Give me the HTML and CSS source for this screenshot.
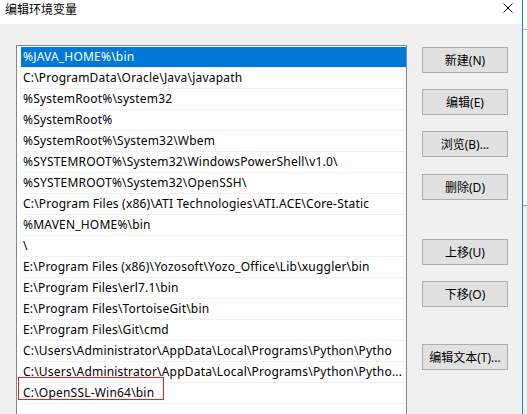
FILE: index.html
```html
<!DOCTYPE html>
<html lang="zh-CN">
<head>
<meta charset="utf-8">
<title>编辑环境变量</title>
<link rel="stylesheet" href="styles.css">
</head>
<body>
<div class="screen">
  <div class="window">
    <div class="titlebar">
      <span class="title">编辑环境变量</span>
      <svg class="close" width="10" height="10" viewBox="0 0 10 10"><path d="M0.5 0.5L9.5 9.5M9.5 0.5L0.5 9.5" stroke="#000" stroke-width="1" fill="none"/></svg>
    </div>
    <div class="content">
      <div class="list">
        <div class="row selected">%JAVA_HOME%\bin</div>
        <div class="row">C:\ProgramData\Oracle\Java\javapath</div>
        <div class="row">%SystemRoot%\system32</div>
        <div class="row">%SystemRoot%</div>
        <div class="row">%SystemRoot%\System32\Wbem</div>
        <div class="row">%SYSTEMROOT%\System32\WindowsPowerShell\v1.0\</div>
        <div class="row">%SYSTEMROOT%\System32\OpenSSH\</div>
        <div class="row">C:\Program Files (x86)\ATI Technologies\ATI.ACE\Core-Static</div>
        <div class="row">%MAVEN_HOME%\bin</div>
        <div class="row">\</div>
        <div class="row">E:\Program Files (x86)\Yozosoft\Yozo_Office\Lib\xuggler\bin</div>
        <div class="row">E:\Program Files\erl7.1\bin</div>
        <div class="row">E:\Program Files\TortoiseGit\bin</div>
        <div class="row">E:\Program Files\Git\cmd</div>
        <div class="row">C:\Users\Administrator\AppData\Local\Programs\Python\Pytho</div>
        <div class="row">C:\Users\Administrator\AppData\Local\Programs\Python\Pytho...</div>
        <div class="row">C:\OpenSSL-Win64\bin</div>
      </div>
      <div class="buttons">
        <div class="btn b-new">新建(N)</div>
        <div class="btn b-edit">编辑(E)</div>
        <div class="btn b-browse">浏览(B)...</div>
        <div class="btn b-del">删除(D)</div>
        <div class="btn b-up">上移(U)</div>
        <div class="btn b-down">下移(O)</div>
        <div class="btn b-text">编辑文本(T)...</div>
      </div>
    </div>
  </div>
  <div class="edge">
    <div class="edge-top"></div>
    <div class="edge-mid"></div>
    <div class="edge-bot"></div>
  </div>
  <div class="annot"></div>
</div>
</body>
</html>
```
FILE: styles.css
```css
html, body {
  margin: 0;
  padding: 0;
  background: #ffffff;
}
.screen {
  position: relative;
  width: 527px;
  height: 414px;
  overflow: hidden;
  display: flex;
  font-family: "Noto Sans", "Noto Sans CJK SC", sans-serif;
  font-size: 12px;
  color: #000;
}
.window {
  width: 522px;
  height: 414px;
  border-right: 1px solid #1883d7;
  display: flex;
  flex-direction: column;
  flex: none;
}
.titlebar {
  height: 24px;
  background: #fff;
  display: flex;
  align-items: flex-start;
  flex: none;
}
.title {
  padding-left: 5px;
  line-height: 18px;
  font-family: "Noto Sans CJK SC", sans-serif;
  font-size: 12px;
}
.close {
  margin-left: auto;
  margin-right: 9px;
  margin-top: 3px;
}
.content {
  flex: 1;
  background: #f0f0f0;
  display: flex;
  align-items: flex-start;
  overflow: hidden;
}
.list {
  margin-left: 16px;
  margin-top: 21px;
  width: 391px;
  height: 400px;
  box-sizing: border-box;
  border: 1px solid #828790;
  background: #fff;
  padding: 1px 0 0 4px;
  flex: none;
}
.row {
  height: 21px;
  box-sizing: border-box;
  border-bottom: 1px solid #f0f0f0;
  padding-left: 2px;
  line-height: 20px;
  letter-spacing: 0.2px;
  white-space: nowrap;
  overflow: hidden;
}
.row.selected {
  background: #0078d7;
  color: #fff;
}
.buttons {
  margin-left: 15px;
  margin-top: 23px;
  display: flex;
  flex-direction: column;
  width: 86px;
  flex: none;
}
.btn {
  height: 26px;
  box-sizing: border-box;
  border: 1px solid #adadad;
  background: #e1e1e1;
  display: flex;
  align-items: center;
  justify-content: center;
  font-family: "Noto Sans", "Noto Sans CJK SC", sans-serif;
}
.b-edit, .b-browse { margin-top: 16px; }
.b-del { margin-top: 17px; }
.b-up { margin-top: 39px; }
.b-down { margin-top: 16px; }
.b-text { margin-top: 37px; }
.edge {
  flex: 1;
  display: flex;
  flex-direction: column;
  background: #fff;
}
.edge-top {
  height: 29px;
}
.edge-mid {
  height: 175px;
  border-top: 1px solid #b8b8b8;
  background: #fdfdfd;
}
.edge-bot {
  flex: 1;
  border-top: 1px solid #9a9a9a;
  background: #f0f0f0;
}
.annot {
  position: absolute;
  left: 18px;
  top: 377px;
  width: 146px;
  height: 23px;
  box-sizing: border-box;
  border: 1px solid #e82020;
}
```
